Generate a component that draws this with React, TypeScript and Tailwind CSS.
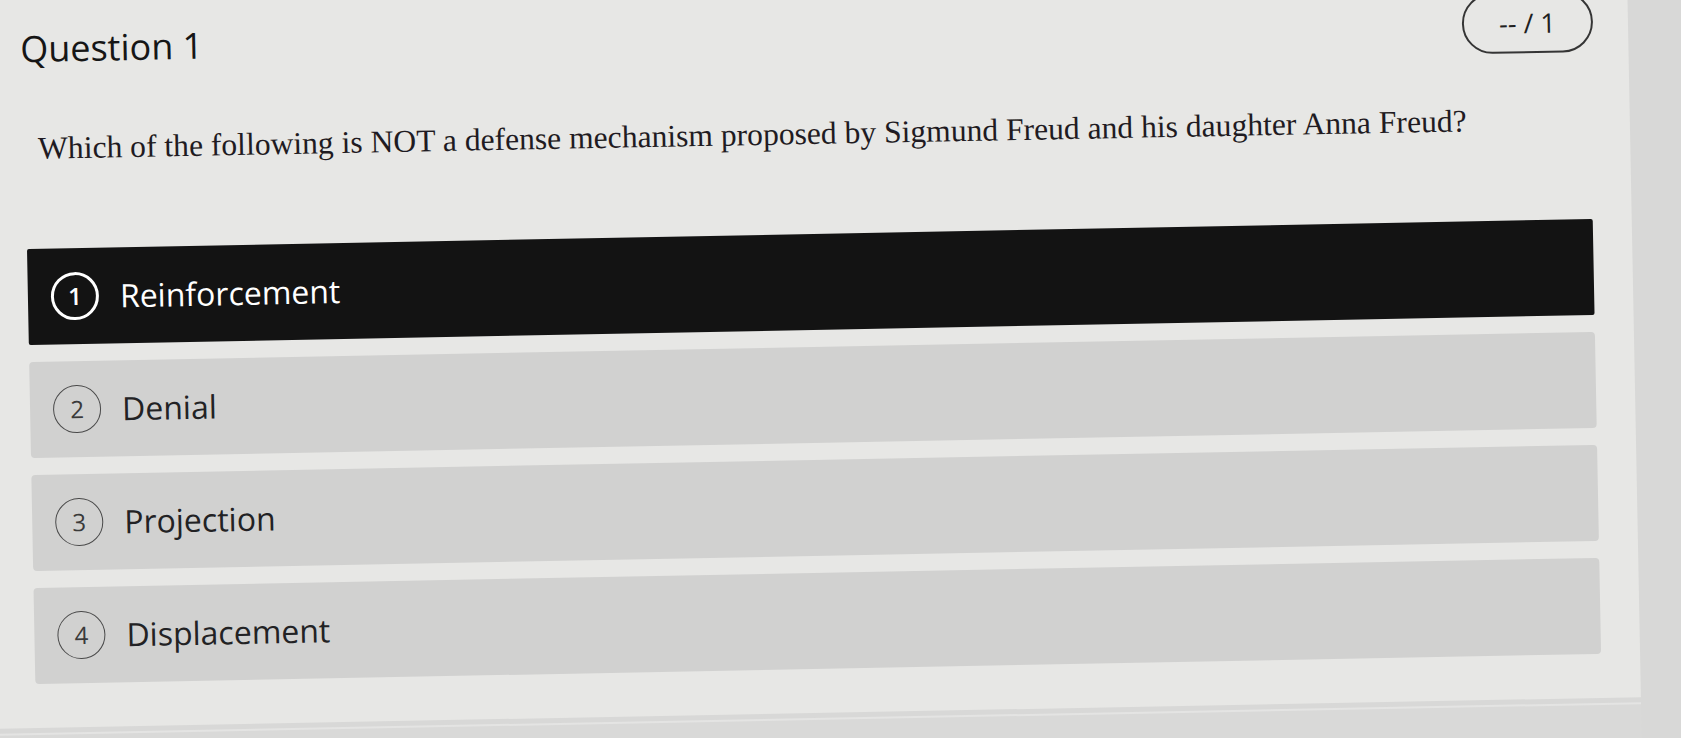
import React from "react";

interface Choice {
  id: number;
  label: string;
}

const choices: Choice[] = [
  { id: 1, label: "Reinforcement" },
  { id: 2, label: "Denial" },
  { id: 3, label: "Projection" },
  { id: 4, label: "Displacement" },
];

function ChoiceRow({ choice, selected }: { choice: Choice; selected: boolean }) {
  return (
    <div
      className={`h-[96px] flex items-center pl-[23px] gap-[21px] ${
        selected ? "bg-[#131313] rounded-[2px]" : "bg-[#d1d1d0] rounded-[4px]"
      }`}
    >
      {/* Number badge */}
      <div
        className={`w-[48px] h-[48px] shrink-0 rounded-full flex items-center justify-center text-[24px] leading-none ${
          selected
            ? "border-[3px] border-white text-white font-semibold"
            : "border-[1.5px] border-[#4a4a4a] text-[#3a3a3a]"
        }`}
      >
        {choice.id}
      </div>
      <span
        className={`text-[32px] leading-none ${
          selected ? "text-white font-medium" : "text-[#222224]"
        }`}
      >
        {choice.label}
      </span>
    </div>
  );
}

export default function App() {
  const selectedId = 1;

  return (
    <div className="w-[1681px] h-[738px] overflow-hidden bg-[#d8d8d7] font-['Open_Sans',sans-serif]">
      {/* the screen was photographed a little tilted */}
      <div className="-mt-[60px] -ml-[60px] w-[1800px] origin-[872px_510px] rotate-[-1.1deg]">
        <div className="w-[1696px] h-[773px] bg-[#e7e7e5] pt-[66px] pl-[88px] pr-[35px]">
          {/* Header */}
          <div className="flex items-start justify-between">
            <h1 className="mt-[8px] text-[36px] leading-[40px] font-normal text-[#161616]">
              Question 1
            </h1>
            <div className="w-[131px] h-[61px] rounded-full border-2 border-[#353535] flex items-center justify-center text-[27px] leading-none text-[#202020]">
              -- / 1
            </div>
          </div>

          {/* Question text */}
          <p className="mt-[47px] ml-[16px] font-['Liberation_Serif',serif] text-[31.6px] leading-[40px] text-[#1f1b22]">
            Which of the following is NOT a defense mechanism proposed by Sigmund Freud and his
            daughter Anna Freud?
          </p>

          {/* Choices */}
          <div className="mt-[80px] ml-[3px] mr-[4px] flex flex-col gap-[17px]">
            {choices.map((c) => (
              <ChoiceRow key={c.id} choice={c} selected={c.id === selectedId} />
            ))}
          </div>
        </div>

        {/* next card peeking in below */}
        <div className="mt-[5px] w-[1696px] h-[80px] border-t-2 border-[#e4e4e3] bg-[#d9d9d8]" />
      </div>
    </div>
  );
}
